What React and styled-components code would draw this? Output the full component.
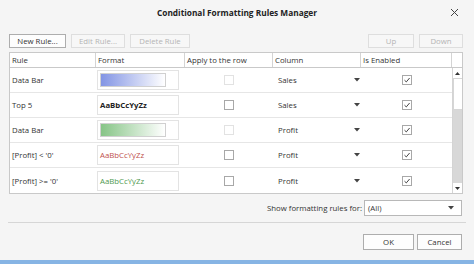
import React from 'react';
import styled, {createGlobalStyle} from 'styled-components';

const GlobalStyle = createGlobalStyle`
    body {
        margin: 0;
        background: #f5f5f5;
        font-family: "Open Sans", "Noto Sans", sans-serif;
        color: #333;
    }
`;

const rules = [
    {name: 'Data Bar', format: 'bar', tone: 'blue', column: 'Sales', applyDisabled: true},
    {name: 'Top 5', format: 'text', tone: 'bold', column: 'Sales'},
    {name: 'Data Bar', format: 'bar', tone: 'green', column: 'Profit', applyDisabled: true},
    {name: "[Profit] < '0'", format: 'text', tone: 'red', column: 'Profit'},
    {name: "[Profit] >= '0'", format: 'text', tone: 'green', column: 'Profit'},
];

const Arrow = () => (
    <svg width="6" height="4" viewBox="0 0 6 4">
        <path d="M0 0 L6 0 L3 3.5 Z" fill="#444" />
    </svg>
);

const Check = ({disabled, checked}) => (
    <CheckBox disabled={disabled}>
        {checked && (
            <svg width="8" height="8" viewBox="0 0 8 8">
                <path d="M1.5 4.2 L3.3 5.9 L6.6 2" stroke="#444" strokeWidth="1" fill="none" />
            </svg>
        )}
    </CheckBox>
);

const App = () => {
    return (
        <Dialog>
            <GlobalStyle />
            <TitleBar>
                <Title>Conditional Formatting Rules Manager</Title>
                <Close>
                    <svg width="9" height="9" viewBox="0 0 9 9">
                        <path d="M1 1 L8 8 M8 1 L1 8" stroke="#444" strokeWidth="1" />
                    </svg>
                </Close>
            </TitleBar>

            <Toolbar>
                <Group>
                    <Button width={57}>New Rule...</Button>
                    <Button width={54} disabled>Edit Rule...</Button>
                    <Button width={60} disabled>Delete Rule</Button>
                </Group>
                <Group>
                    <Button width={46} disabled>Up</Button>
                    <Button width={44} disabled>Down</Button>
                </Group>
            </Toolbar>

            <Grid>
                <Header>
                    <HeadCell>Rule</HeadCell>
                    <HeadCell>Format</HeadCell>
                    <HeadCell>Apply to the row</HeadCell>
                    <HeadCell>Column</HeadCell>
                    <HeadCell>Is Enabled</HeadCell>
                    <HeadCell last />
                </Header>
                <Body>
                    <Rows>
                        {rules.map((r, i) => (
                            <Row key={i}>
                                <Cell>{r.name}</Cell>
                                <FormatCell>
                                    <Preview>
                                        {r.format === 'bar'
                                            ? <Bar tone={r.tone} />
                                            : <Sample tone={r.tone}>AaBbCcYyZz</Sample>}
                                    </Preview>
                                </FormatCell>
                                <CenterCell><Check disabled={r.applyDisabled} /></CenterCell>
                                <ColumnCell>
                                    <span>{r.column}</span>
                                    <Arrow />
                                </ColumnCell>
                                <CenterCell><Check checked /></CenterCell>
                            </Row>
                        ))}
                    </Rows>
                    <ScrollBar>
                        <ScrollBtn>
                            <svg width="5" height="3" viewBox="0 0 5 3"><path d="M0 3 L5 3 L2.5 0 Z" fill="#333" /></svg>
                        </ScrollBtn>
                        <Thumb />
                        <Track />
                        <ScrollBtn>
                            <svg width="5" height="3" viewBox="0 0 5 3"><path d="M0 0 L5 0 L2.5 3 Z" fill="#333" /></svg>
                        </ScrollBtn>
                    </ScrollBar>
                </Body>
            </Grid>

            <FilterRow>
                <Label>Show formatting rules for:</Label>
                <Combo>
                    <span>(All)</span>
                    <Arrow />
                </Combo>
            </FilterRow>

            <Separator />

            <Footer>
                <Button width={51} tall>OK</Button>
                <Button width={45} tall>Cancel</Button>
            </Footer>

            <BlueEdge />
        </Dialog>
    );
};

const Dialog = styled.div`
    width: 474px;
    height: 264px;
    display: flex;
    flex-direction: column;
    background: #f5f5f5;
    overflow: hidden;
    font-size: 8px;
`;

const TitleBar = styled.div`
    height: 25px;
    display: flex;
    align-items: center;
    justify-content: center;
    position: relative;
`;

const Title = styled.div`
    font-weight: bold;
    font-size: 8.3px;
    color: #222;
`;

const Close = styled.div`
    position: absolute;
    right: 15px;
    top: 8px;
    display: flex;
`;

const Toolbar = styled.div`
    display: flex;
    justify-content: space-between;
    padding: 9px 11px 0 9px;
`;

const Group = styled.div`
    display: flex;
    gap: 5px;
`;

const Button = styled.div`
    width: ${p => p.width}px;
    height: ${p => (p.tall ? 16 : 14)}px;
    box-sizing: border-box;
    border: 1px solid ${p => (p.disabled ? '#dedede' : '#adadad')};
    background: ${p => (p.disabled ? '#f7f7f7' : '#fdfdfd')};
    color: ${p => (p.disabled ? '#b4b4b4' : '#333')};
    display: flex;
    align-items: center;
    justify-content: center;
    font-size: 7.8px;
`;

const Grid = styled.div`
    margin: 4px 11px 0 9px;
    border: 1px solid #c9c9c9;
    background: #fff;
`;

const Header = styled.div`
    display: grid;
    grid-template-columns: 86px 89px 88px 88px 91px 1fr;
    height: 15px;
    box-sizing: border-box;
    border-bottom: 1px solid #c9c9c9;
`;

const HeadCell = styled.div`
    border-right: ${p => (p.last ? 'none' : '1px solid #d4d4d4')};
    padding-left: 2px;
    display: flex;
    align-items: center;
    font-size: 7.8px;
    color: #333;
`;

const Body = styled.div`
    display: flex;
`;

const Rows = styled.div`
    flex: 1;
`;

const Row = styled.div`
    display: grid;
    grid-template-columns: 86px 89px 88px 88px 91px;
    height: 25px;
    box-sizing: border-box;
    border-bottom: 1px solid #e6e6e6;

    &:last-child {
        border-bottom: none;
    }
`;

const Cell = styled.div`
    display: flex;
    align-items: center;
    padding-left: 2px;
    font-size: 7.8px;
    color: #333;
`;

const FormatCell = styled.div`
    display: flex;
    align-items: center;
    padding-left: 1px;
`;

const Preview = styled.div`
    width: 82px;
    height: 20px;
    box-sizing: border-box;
    border: 1px solid #e3e3e3;
    display: flex;
    align-items: center;
    padding-left: 2px;
`;

const barTones = {
    blue: 'linear-gradient(to right, #8294e4, #ffffff)',
    green: 'linear-gradient(to right, #86c486, #ffffff)',
};

const Bar = styled.div`
    width: 66px;
    height: 14px;
    box-sizing: border-box;
    border: 1px solid #d0d0d0;
    background: ${p => barTones[p.tone]};
`;

const sampleColors = {bold: '#222', red: '#c0504d', green: '#4f9a4f'};

const Sample = styled.span`
    font-size: 7.8px;
    font-weight: ${p => (p.tone === 'bold' ? 'bold' : 'normal')};
    color: ${p => sampleColors[p.tone]};
`;

const CenterCell = styled.div`
    display: flex;
    align-items: center;
    justify-content: center;
`;

const CheckBox = styled.div`
    width: 10px;
    height: 10px;
    box-sizing: border-box;
    border: 1px solid ${p => (p.disabled ? '#e2e2e2' : '#a8a8a8')};
    background: #fff;
    display: flex;
    align-items: center;
    justify-content: center;
`;

const ColumnCell = styled.div`
    display: flex;
    align-items: center;
    justify-content: space-between;
    padding: 0 1px 0 5px;
    font-size: 7.8px;
    color: #333;
`;

const ScrollBar = styled.div`
    width: 11px;
    border-left: 1px solid #d4d4d4;
    display: flex;
    flex-direction: column;
    background: #fff;
`;

const ScrollBtn = styled.div`
    height: 10px;
    display: flex;
    align-items: center;
    justify-content: center;
`;

const Thumb = styled.div`
    height: 30px;
    border: 1px solid #d6d6d6;
    border-right: none;
    background: #fff;
`;

const Track = styled.div`
    flex: 1;
    background: #d8d8d8;
`;

const FilterRow = styled.div`
    display: flex;
    justify-content: flex-end;
    align-items: center;
    gap: 2px;
    padding: 6px 12px 0 0;
`;

const Label = styled.span`
    font-size: 7.8px;
    color: #333;
`;

const Combo = styled.div`
    width: 98px;
    height: 16px;
    box-sizing: border-box;
    border: 1px solid #b8b8b8;
    background: #fff;
    display: flex;
    align-items: center;
    justify-content: space-between;
    padding: 0 7px 0 3px;
    font-size: 7.8px;
    color: #333;
`;

const Separator = styled.div`
    height: 1px;
    background: #d6d6d6;
    margin: 6px 8px 0 8px;
`;

const Footer = styled.div`
    display: flex;
    justify-content: flex-end;
    gap: 3px;
    padding: 11px 12px 0 0;
`;

const BlueEdge = styled.div`
    margin-top: auto;
    height: 4px;
    background: #86b4e4;
`;

export default App;
